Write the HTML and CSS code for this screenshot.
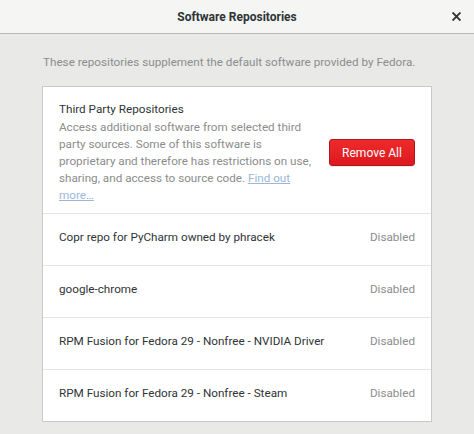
FILE: index.html
```html
<!DOCTYPE html>
<html>
<head>
<meta charset="utf-8">
<link rel="stylesheet" href="styles.css">
</head>
<body>
<div class="window">
  <header class="titlebar">
    <div class="title">Software Repositories</div>
    <button class="close" aria-label="Close">
      <svg width="9" height="9" viewBox="0 0 9 9"><path d="M1.2 1.2 L7.8 7.8 M7.8 1.2 L1.2 7.8" stroke="#2e3436" stroke-width="1.9" stroke-linecap="square"/></svg>
    </button>
  </header>
  <main class="content">
    <p class="intro">These repositories supplement the default software provided by Fedora.</p>
    <div class="card">
      <div class="row third-party">
        <div class="tp-text">
          <div class="tp-title">Third Party Repositories</div>
          <div class="tp-desc">Access additional software from selected third party sources. Some of this software is proprietary and therefore has restrictions on use, sharing, and access to source code. <a href="#" class="link">Find out more…</a></div>
        </div>
        <button class="remove">Remove All</button>
      </div>
      <div class="row repo"><span class="name">Copr repo for PyCharm owned by phracek</span><span class="state">Disabled</span></div>
      <div class="row repo"><span class="name">google-chrome</span><span class="state">Disabled</span></div>
      <div class="row repo"><span class="name">RPM Fusion for Fedora 29 - Nonfree - NVIDIA Driver</span><span class="state">Disabled</span></div>
      <div class="row repo"><span class="name">RPM Fusion for Fedora 29 - Nonfree - Steam</span><span class="state">Disabled</span></div>
    </div>
  </main>
</div>
</body>
</html>
```
FILE: styles.css
```css
* { box-sizing: border-box; }
html, body { margin: 0; padding: 0; }
body {
  width: 474px;
  height: 434px;
  overflow: hidden;
  font-family: "Roboto", "Liberation Sans", sans-serif;
  font-size: 11.7px;
  color: #2e3436;
  background: #e9e9e8;
}
.window { display: flex; flex-direction: column; height: 434px; }
.titlebar {
  height: 34px;
  flex: none;
  display: flex;
  align-items: center;
  justify-content: center;
  position: relative;
  background: #f5f5f4;
  border-bottom: 1px solid #b8b8b6;
}
.title { font-weight: bold; font-size: 12px; color: #2e3436; }
.close {
  position: absolute;
  right: 12px;
  top: 10px;
  width: 12px;
  height: 12px;
  padding: 0;
  border: 0;
  background: none;
  display: flex;
  align-items: center;
  justify-content: center;
}
.content { padding: 19px 42px 0 42px; flex: 1; }
.intro { margin: 0 0 15px 1px; color: #8c8d8c; line-height: 18px; }
.card {
  background: #ffffff;
  border: 1px solid #c9c9c7;
}
.row { border-top: 1px solid #e4e4e3; }
.row:first-child { border-top: 0; }
.third-party {
  display: flex;
  align-items: center;
  padding: 12px 16px 9px 16px;
  gap: 14px;
}
.tp-text { flex: 1; }
.tp-title { line-height: 20px; }
.tp-desc { color: #8b8c8b; line-height: 17px; }
.link { color: #9ab7d8; text-decoration: underline; }
.remove {
  flex: none;
  width: 86px;
  height: 27px;
  margin-top: 2px;
  border: 1px solid #b6141b;
  border-radius: 3px;
  background: linear-gradient(#ee2a2a, #dc1a1f);
  color: #ffffff;
  font-family: inherit;
  font-size: 12px;
  padding: 0;
  box-shadow: 0 1px 0 rgba(0,0,0,0.08);
}
.repo {
  height: 52px;
  display: flex;
  align-items: center;
  justify-content: space-between;
  padding: 0 16px 5px 16px;
}
.state { color: #8c8d8c; }
```
